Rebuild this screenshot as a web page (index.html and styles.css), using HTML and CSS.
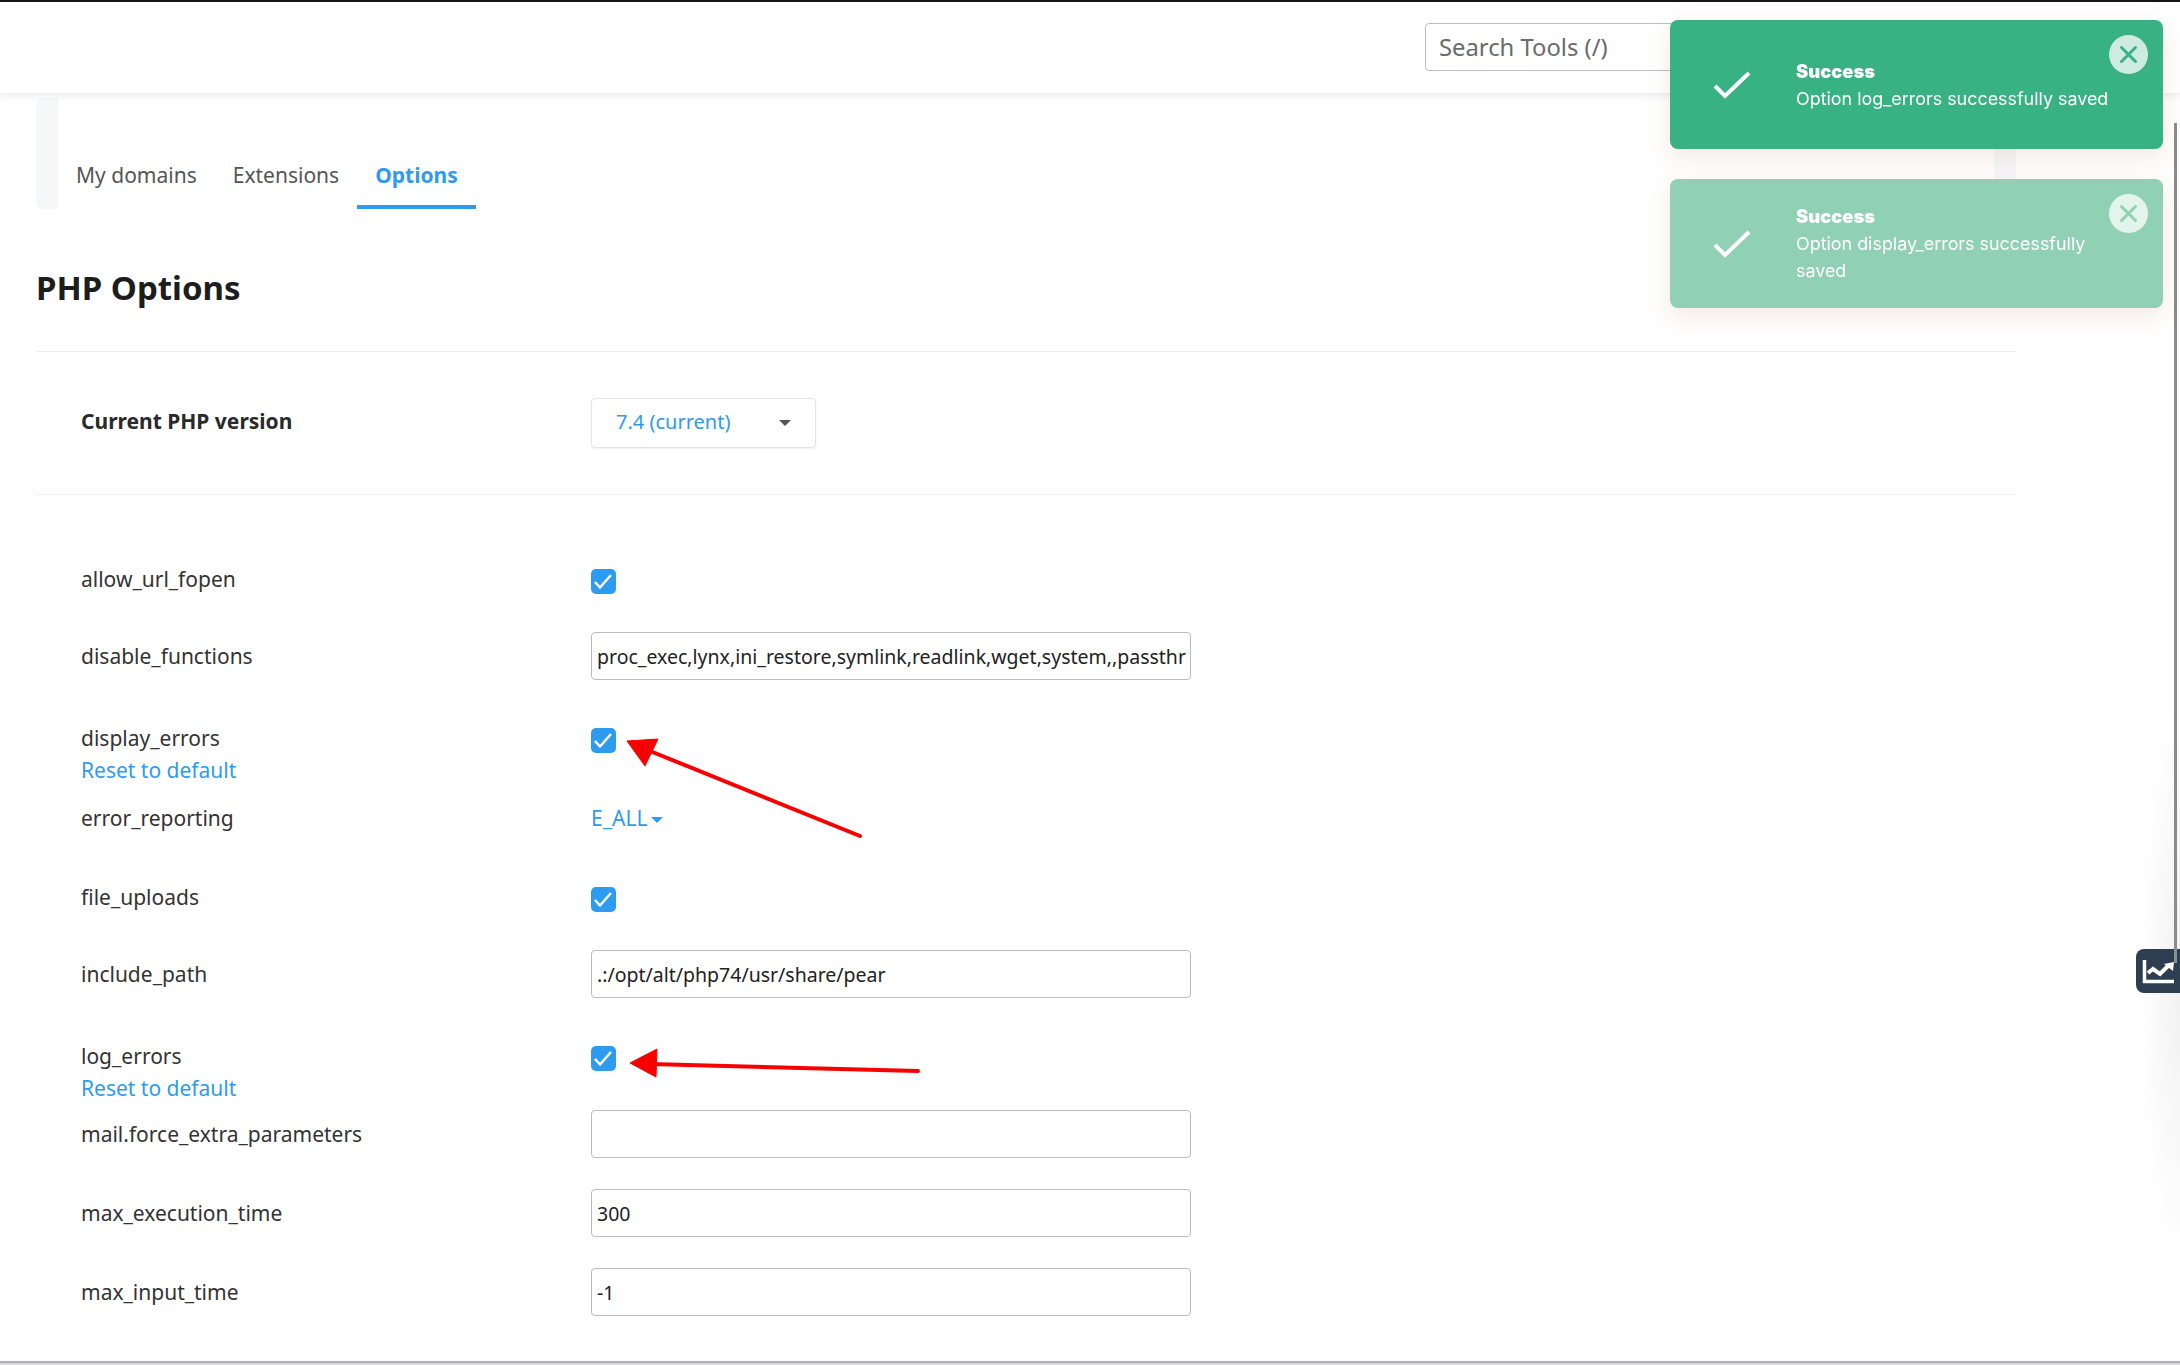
FILE: index.html
```html
<!DOCTYPE html>
<html lang="en">
<head>
<meta charset="utf-8">
<title>PHP Options</title>
<link rel="stylesheet" href="styles.css">
</head>
<body>
<header class="topbar">
  <div class="search">Search Tools (/)</div>
</header>
<main class="content">
  <nav class="tabs">
    <span class="stub stub-left"></span>
    <a class="tab">My domains</a>
    <a class="tab">Extensions</a>
    <a class="tab tab-active">Options</a>
    <span class="stub stub-right"></span>
  </nav>
  <h1 class="title">PHP Options</h1>
  <section class="version">
    <div class="label label-strong">Current PHP version</div>
    <div class="select"><span class="select-text">7.4 (current)</span><i class="caret caret-dark"></i></div>
  </section>
  <section class="options">
    <div class="row row-check"><div class="label">allow_url_fopen</div><span class="check"><svg viewBox="0 0 25 25"><path d="M4 13l5 5.500L20 6"/></svg></span></div>
    <div class="row row-input"><div class="label">disable_functions</div><div class="input">proc_exec,lynx,ini_restore,symlink,readlink,wget,system,,passthr</div></div>
    <div class="row row-reset"><div class="label-stack"><div class="label">display_errors</div><a class="reset">Reset to default</a></div><span class="check"><svg viewBox="0 0 25 25"><path d="M4 13l5 5.500L20 6"/></svg></span></div>
    <div class="row row-plain"><div class="label">error_reporting</div><a class="link-drop">E_ALL<i class="caret caret-blue"></i></a></div>
    <div class="row row-check"><div class="label">file_uploads</div><span class="check"><svg viewBox="0 0 25 25"><path d="M4 13l5 5.500L20 6"/></svg></span></div>
    <div class="row row-input"><div class="label">include_path</div><div class="input">.:/opt/alt/php74/usr/share/pear</div></div>
    <div class="row row-reset row-reset-last"><div class="label-stack"><div class="label">log_errors</div><a class="reset">Reset to default</a></div><span class="check"><svg viewBox="0 0 25 25"><path d="M4 13l5 5.500L20 6"/></svg></span></div>
    <div class="row row-input row-tight"><div class="label">mail.force_extra_parameters</div><div class="input"></div></div>
    <div class="row row-input row-tight"><div class="label">max_execution_time</div><div class="input">300</div></div>
    <div class="row row-input row-tight"><div class="label">max_input_time</div><div class="input">-1</div></div>
  </section>
</main>

<svg class="arrows" viewBox="0 0 2180 1365" aria-hidden="true">
  <line x1="860" y1="836" x2="650" y2="751"/>
  <polygon points="627,741 658,739 645,766"/>
  <line x1="918" y1="1071" x2="650" y2="1064"/>
  <polygon points="630,1063 657,1049 656,1077"/>
</svg>

<div class="toasts">
  <div class="toast">
    <svg class="toast-check" viewBox="0 0 38 28"><path d="M2 15l10 10L36 2"/></svg>
    <div class="toast-body"><div class="toast-title">Success</div><div class="toast-msg">Option log_errors successfully saved</div></div>
    <span class="toast-close"><svg viewBox="0 0 39 39"><path d="M12.500 12.500l14 14M26.500 12.500l-14 14"/></svg></span>
  </div>
  <div class="toast toast-faded">
    <svg class="toast-check" viewBox="0 0 38 28"><path d="M2 15l10 10L36 2"/></svg>
    <div class="toast-body"><div class="toast-title">Success</div><div class="toast-msg">Option display_errors successfully saved</div></div>
    <span class="toast-close"><svg viewBox="0 0 39 39"><path d="M12.500 12.500l14 14M26.500 12.500l-14 14"/></svg></span>
  </div>
</div>

<div class="widget-glow"></div>
<div class="scrollbar"></div>
<div class="widget"><svg viewBox="0 0 44 44"><path class="axis" d="M8.500 11V32.500H38"/><path class="trend" d="M12 24l5-4 7 5 8-8"/><path class="tip" d="M28 15l10-2-1 9z"/></svg></div>
<div class="bottom-edge"></div>
</body>
</html>
```
FILE: styles.css
```css
* { box-sizing: border-box; }
html, body { margin: 0; height: 1365px; overflow: hidden; background: #fff; }
body { font-family: "Noto Sans", "Open Sans", sans-serif; font-size: 21px; color: #2a2a2a; position: relative; }

.topbar { height: 93px; border-top: 2px solid #16161a; background: #fff; box-shadow: 0 2px 8px rgba(40,40,60,.1); display: flex; align-items: flex-start; justify-content: flex-end; padding: 21px 480px 0 0; position: relative; z-index: 1; }
.search { width: 275px; height: 48px; border: 1px solid #bdbcc6; border-radius: 4px; padding: 0 13px; font-size: 23.800px; line-height: 46px; color: #6b6b6b; }

.content { padding: 5px 164px 0 36px; }
.tabs { height: 111px; display: flex; align-items: flex-end; position: relative; padding-left: 22px; }
.stub { position: absolute; top: 0; bottom: 0; width: 22px; background: #f6f7f9; }
.stub-left { left: 0; border-radius: 8px 0 0 8px; }
.stub-right { right: 0; border-radius: 0 8px 8px 0; }
.tab { padding: 0 18px 16px; height: 50px; line-height: 32px; color: #555; }
.tab-active { color: #2d9bf0; font-weight: 700; border-bottom: 4px solid #2d9bf0; }

.title { margin: 55px 0 0; font-size: 33px; line-height: 48px; font-weight: 700; color: #1d1d1d; padding-bottom: 39px; border-bottom: 1px solid #eceef1; }

.version { height: 143px; display: flex; align-items: center; padding-left: 45px; border-bottom: 1px solid #eceef1; }
.label { width: 510px; flex: none; line-height: 32px; color: #333; }
.label-strong { font-weight: 700; color: #2a2a2a; position: relative; top: -2px; }
.select { width: 225px; height: 50px; border: 1px solid #e2e3ec; border-radius: 4px; box-shadow: 0 1px 2px rgba(50,50,90,.08); color: #2d9bf0; font-size: 20px; display: flex; align-items: center; justify-content: space-between; padding: 0 24px; }
.select-text { position: relative; top: -2px; }

.caret { display: inline-block; width: 0; height: 0; border-left: 6px solid transparent; border-right: 6px solid transparent; border-top: 6px solid; }
.caret-dark { color: #555; }
.caret-blue { color: #2d9bf0; margin-left: 4px; vertical-align: middle; }

.options { padding: 74px 0 0 45px; }
.row { display: flex; align-items: center; }
.row-check { height: 25px; margin-bottom: 38px; }
.row-check .label { position: relative; top: -3px; }
.row-input { height: 48px; margin-bottom: 48px; }
.row-tight { margin-bottom: 31px; }
.row-reset { height: 64px; margin-bottom: 3px; align-items: flex-start; }
.row-reset-last { margin-bottom: 0; }
.row-plain { height: 46px; margin-bottom: 46px; }
.label-stack { width: 510px; flex: none; margin-top: -6px; }
.reset { display: block; color: #2d9bf0; line-height: 32px; }
.link-drop { color: #2d9bf0; }

.check { width: 25px; height: 25px; border-radius: 5px; background: #2d9bf0; flex: none; }
.check svg { display: block; width: 25px; height: 25px; fill: none; stroke: #fff; stroke-width: 2.500; }

.input { width: 600px; height: 48px; flex: none; border: 1px solid #bbb; border-radius: 4px; padding: 0 5px; font-size: 19.500px; line-height: 47px; color: #222; white-space: nowrap; overflow: hidden; }

.arrows { position: absolute; left: 0; top: 0; width: 2180px; height: 1365px; pointer-events: none; z-index: 2; }
.arrows line { stroke: #f90000; stroke-width: 4; stroke-linecap: round; }
.arrows polygon { fill: #f90000; stroke: #f90000; stroke-width: 1; stroke-linejoin: round; }

.toasts { position: fixed; top: 20px; right: 17px; width: 493px; display: flex; flex-direction: column; gap: 30px; z-index: 5; }
.toast { height: 129px; background: #38b183; border-radius: 8px; box-shadow: 0 8px 24px rgba(190,130,100,.18); color: #fff; display: flex; align-items: center; position: relative; padding-left: 43px; }
.toast-faded { background: #90d1b5; }
.toast-check { width: 38px; height: 28px; flex: none; fill: none; stroke: #fff; stroke-width: 4; }
.toast-body { margin-left: 45px; width: 330px; font-family: "Inter", "Liberation Sans", sans-serif; font-size: 17.900px; line-height: 27px; align-self: flex-start; padding-top: 38px; }
.toast-faded .toast-body { padding-top: 24px; }
.toast-title { font-weight: 900; font-size: 18.400px; }
.toast-close { position: absolute; top: 15px; right: 15px; width: 39px; height: 39px; border-radius: 50%; background: rgba(255,255,255,.75); }
.toast-close svg { display: block; width: 39px; height: 39px; fill: none; stroke: #38b183; stroke-width: 3; stroke-linecap: round; }
.toast-faded .toast-close svg { stroke: #90d1b5; }

.widget-glow { position: absolute; right: 0; top: 700px; width: 60px; height: 570px; background: radial-gradient(ellipse 40px 285px at 100% 50%, #f1f1f1, rgba(241,241,241,0)); z-index: 2; }
.scrollbar { position: absolute; right: 3px; top: 123px; width: 3px; height: 840px; background: #8c8c8c; z-index: 4; }
.widget { position: absolute; right: 0; top: 949px; width: 44px; height: 44px; background: #2c3e50; border-radius: 8px 0 0 8px; z-index: 3; }
.widget svg { display: block; width: 44px; height: 44px; }
.widget .axis { fill: none; stroke: #fff; stroke-width: 3.500; }
.widget .trend { fill: none; stroke: #fff; stroke-width: 4; }
.widget .tip { fill: #fff; }
.bottom-edge { position: absolute; left: 0; right: 0; bottom: 0; height: 4px; background: linear-gradient(#b0b0b4 50%, #d4d6da 50%); z-index: 2; }
```
